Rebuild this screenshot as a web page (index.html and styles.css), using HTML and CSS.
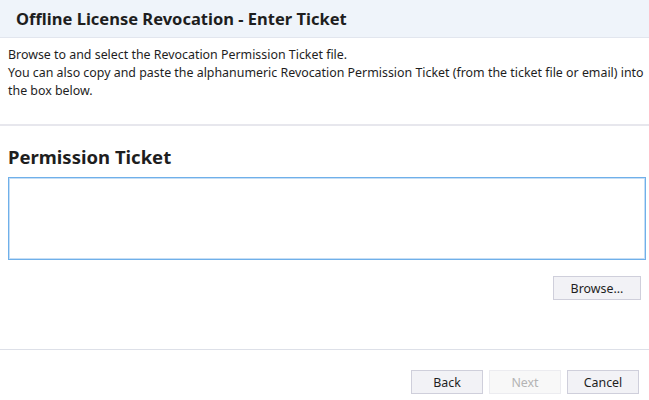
FILE: index.html
```html
<!DOCTYPE html>
<html lang="en">

<head>
    <meta charset="UTF-8">
    <meta name="viewport" content="width=device-width, initial-scale=1.0">
    <link rel="stylesheet" href="styles.css">
    <title>Offline License Revocation</title>
</head>

<body>
    <header class="page-head">
        <h1>Offline License Revocation - Enter Ticket</h1>
    </header>

    <section class="intro">
        <p>Browse to and select the Revocation Permission Ticket file.</p>
        <p>You can also copy and paste the alphanumeric Revocation Permission Ticket (from the ticket file or email) into the box below.</p>
    </section>

    <section class="ticket">
        <h2>Permission Ticket</h2>
        <textarea class="ticket-box"></textarea>
        <div class="browse-row">
            <button class="btn">Browse...</button>
        </div>
    </section>

    <footer class="wizard-nav">
        <button class="btn">Back</button>
        <button class="btn" disabled>Next</button>
        <button class="btn">Cancel</button>
    </footer>
</body>

</html>
```

FILE: styles.css
```css
* {
    margin: 0;
    padding: 0;
    box-sizing: border-box;
}

body {
    width: 649px;
    height: 400px;
    overflow: hidden;
    background-color: #fff;
    color: #1e1e1e;
    font-family: "Noto Sans", "Open Sans", sans-serif;
    font-size: 12px;
}

.page-head {
    height: 38px;
    padding: 8px 16px 0;
    background-color: #eff4fa;
    border-bottom: 1px solid #e2e6ee;
}

.page-head h1 {
    font-size: 16.5px;
    font-weight: bold;
    line-height: 22px;
}

.intro {
    height: 88px;
    padding: 8px 2px 0 8px;
    border-bottom: 2px solid #e7e7ed;
}

.intro p {
    font-size: 12.4px;
    line-height: 18px;
}

.ticket {
    padding: 19px 3px 0 8px;
    height: 224px;
    border-bottom: 1px solid #dde0e8;
}

.ticket h2 {
    font-size: 18.5px;
    font-weight: bold;
    line-height: 24px;
    margin-bottom: 8px;
}

.ticket-box {
    display: block;
    width: 638px;
    height: 83px;
    border: 1px solid #6fb0ea;
    box-shadow: 0 0 0 1px #c6def5 inset;
    resize: none;
    outline: none;
    font-family: inherit;
}

.browse-row {
    display: flex;
    justify-content: flex-end;
    padding: 16px 5px 0 0;
}

.btn {
    width: 72px;
    height: 24px;
    background-color: #f2f2f6;
    border: 1px solid #cfcfdb;
    color: #1e1e1e;
    font-family: inherit;
    font-size: 12.4px;
}

.browse-row .btn {
    width: 88px;
}

.btn:disabled {
    background-color: #f8f8f8;
    border-color: #ececf0;
    color: #b4b4b4;
}

.wizard-nav {
    display: flex;
    justify-content: flex-end;
    gap: 6px;
    padding: 20px 10px 0 0;
}
```
